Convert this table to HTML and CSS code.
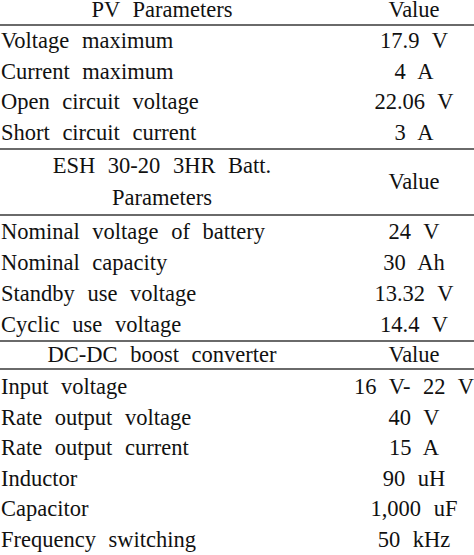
FILE: index.html
```html
<!DOCTYPE html>
<html>
<head>
<meta charset="utf-8">
<link rel="stylesheet" href="styles.css">
</head>
<body>
<div class="sheet">
  <div class="head head-first">
    <div class="c1">PV Parameters</div>
    <div class="c2">Value</div>
  </div>
  <div class="group g1">
    <div class="row"><div class="c1">Voltage maximum</div><div class="c2">17.9 V</div></div>
    <div class="row"><div class="c1">Current maximum</div><div class="c2">4 A</div></div>
    <div class="row"><div class="c1">Open circuit voltage</div><div class="c2">22.06 V</div></div>
    <div class="row"><div class="c1">Short circuit current</div><div class="c2">3 A</div></div>
  </div>
  <div class="head head-two">
    <div class="c1">ESH 30-20 3HR Batt.<br>Parameters</div>
    <div class="c2">Value</div>
  </div>
  <div class="group g2">
    <div class="row"><div class="c1">Nominal voltage of battery</div><div class="c2">24 V</div></div>
    <div class="row"><div class="c1">Nominal capacity</div><div class="c2">30 Ah</div></div>
    <div class="row"><div class="c1">Standby use voltage</div><div class="c2">13.32 V</div></div>
    <div class="row"><div class="c1">Cyclic use voltage</div><div class="c2">14.4 V</div></div>
  </div>
  <div class="head head-three">
    <div class="c1">DC-DC boost converter</div>
    <div class="c2">Value</div>
  </div>
  <div class="group g3">
    <div class="row"><div class="c1">Input voltage</div><div class="c2">16 V- 22 V</div></div>
    <div class="row"><div class="c1">Rate output voltage</div><div class="c2">40 V</div></div>
    <div class="row"><div class="c1">Rate output current</div><div class="c2">15 A</div></div>
    <div class="row"><div class="c1">Inductor</div><div class="c2">90 uH</div></div>
    <div class="row"><div class="c1">Capacitor</div><div class="c2">1,000 uF</div></div>
    <div class="row"><div class="c1">Frequency switching</div><div class="c2">50 kHz</div></div>
  </div>
</div>
</body>
</html>
```

FILE: styles.css
```css
html, body {
  margin: 0;
  padding: 0;
  background: #ffffff;
  overflow: hidden;
}

.sheet {
  width: 474px;
  margin-top: -4px;
  font-family: "Liberation Serif", "Times New Roman", serif;
  font-size: 22.5px;
  word-spacing: 7px;
  color: #111111;
}

.row,
.head {
  display: flex;
  white-space: nowrap;
}

.c1 {
  width: 324px;
  flex: none;
  padding-left: 1px;
  box-sizing: border-box;
}

.c2 {
  width: 150px;
  flex: none;
  padding-left: 30px;
  box-sizing: border-box;
  text-align: center;
}

.head .c1 {
  text-align: center;
  padding-left: 0;
}

.head-first {
  height: 30px;
  line-height: 28px;
  box-sizing: border-box;
  border-bottom: 2px solid #6a6a6a;
}

.g1 .row {
  height: 30.5px;
  line-height: 30.5px;
}

.head-two {
  border-top: 2px solid #6a6a6a;
  border-bottom: 2px solid #6a6a6a;
  line-height: 32px;
}

.head-two .c2 {
  display: flex;
  align-items: center;
  justify-content: center;
}

.g2 .row {
  height: 31px;
  line-height: 31px;
}

.head-three {
  border-top: 2px solid #6a6a6a;
  border-bottom: 2px solid #6a6a6a;
  line-height: 26px;
}

.g3 {
  padding-top: 2px;
}

.g3 .row {
  height: 30.5px;
  line-height: 30.5px;
}
```
